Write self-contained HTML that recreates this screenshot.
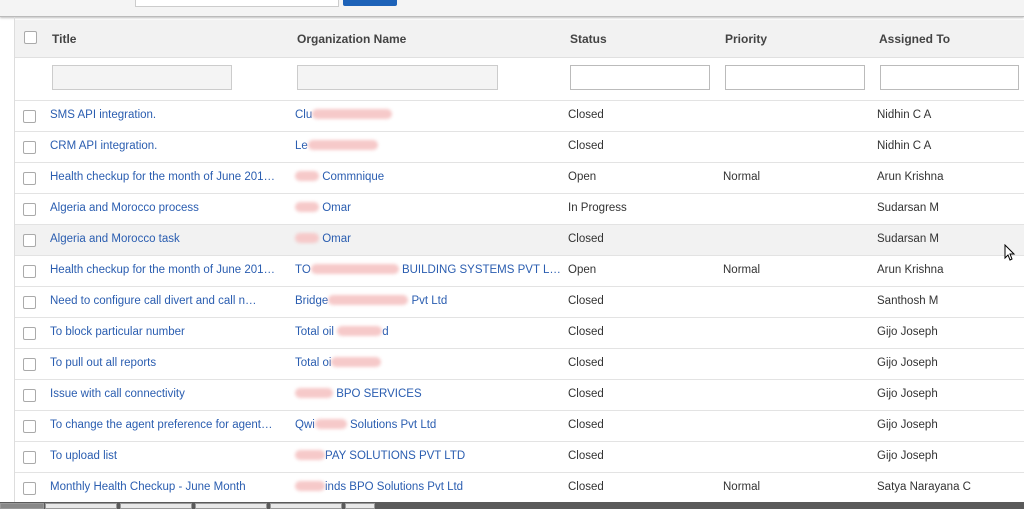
<!DOCTYPE html>
<html><head><style>
body{margin:0;width:1024px;height:509px;overflow:hidden;background:#fff;font-family:"Liberation Sans",sans-serif;position:relative}
.top{position:absolute;left:0;top:0;width:1024px;height:16px;background:#f4f4f4;border-bottom:1px solid #bbb;box-shadow:0 1px 2px rgba(0,0,0,.25)}
.srch{position:absolute;left:135px;top:-3px;width:202px;height:8px;background:#fff;border:1px solid #ccc}
.btn{position:absolute;left:343px;top:0;width:54px;height:6px;background:#1d62b8;border-radius:0 0 2px 2px}
.leftb{position:absolute;left:14px;top:17px;width:1px;height:485px;background:#ddd}
.hdr{position:absolute;left:15px;top:20px;width:1009px;height:37px;background:#f2f2f2;border-bottom:1px solid #e0e0e0}
.hdr span{position:absolute;top:12px;font-size:12px;font-weight:bold;color:#444}
.cb{position:absolute;width:11px;height:11px;border:1px solid #aaa;border-radius:2px;background:#fff}
.inp{position:absolute;top:65px;height:25px;border:1px solid #bbb;box-sizing:border-box}
.row{position:absolute;left:15px;width:1009px;height:30px;border-top:1px solid #e3e3e3;font-size:11.5px;color:#333}
.row span{position:absolute;top:8px;white-space:nowrap}
.row .t,.row .o{color:#2a5db0}
b.blur{display:inline-block;height:10px;background:#f6c9c9;border-radius:5px;vertical-align:-1px;filter:blur(1.5px);font-weight:normal}
.task{position:absolute;left:0;top:502px;width:1024px;height:7px;background:#5a5a5a}
.task i{position:absolute;top:1px;height:6px;background:#e8e8e8;border:1px solid #999;box-sizing:border-box}
</style></head><body>
<div class="top"><div class="srch"></div><div class="btn"></div></div>
<div class="leftb"></div>
<div class="hdr">
<div class="cb" style="left:9px;top:11px"></div>
<span style="left:37px">Title</span>
<span style="left:282px">Organization Name</span>
<span style="left:555px">Status</span>
<span style="left:710px">Priority</span>
<span style="left:864px">Assigned To</span>
</div>
<div class="inp" style="left:52px;width:180px;background:#f4f4f4;border-color:#ccc"></div>
<div class="inp" style="left:297px;width:201px;background:#f4f4f4;border-color:#ccc"></div>
<div class="inp" style="left:570px;width:140px"></div>
<div class="inp" style="left:725px;width:140px"></div>
<div class="inp" style="left:880px;width:139px"></div>

<div class="row" style="top:100px"><div class="cb" style="left:8px;top:9px"></div><span class="t" style="left:35px">SMS API integration.</span><span class="o" style="left:280px">Clu<b class="blur" style="width:80px"></b></span><span style="left:553px">Closed</span><span style="left:862px">Nidhin C A</span></div>
<div class="row" style="top:131px"><div class="cb" style="left:8px;top:9px"></div><span class="t" style="left:35px">CRM API integration.</span><span class="o" style="left:280px">Le<b class="blur" style="width:70px"></b></span><span style="left:553px">Closed</span><span style="left:862px">Nidhin C A</span></div>
<div class="row" style="top:162px"><div class="cb" style="left:8px;top:9px"></div><span class="t" style="left:35px">Health checkup for the month of June 201…</span><span class="o" style="left:280px"><b class="blur" style="width:24px"></b> Commnique</span><span style="left:553px">Open</span><span style="left:708px">Normal</span><span style="left:862px">Arun Krishna</span></div>
<div class="row" style="top:193px"><div class="cb" style="left:8px;top:9px"></div><span class="t" style="left:35px">Algeria and Morocco process</span><span class="o" style="left:280px"><b class="blur" style="width:24px"></b> Omar</span><span style="left:553px">In Progress</span><span style="left:862px">Sudarsan M</span></div>
<div class="row" style="top:224px;background:#f2f2f2"><div class="cb" style="left:8px;top:9px"></div><span class="t" style="left:35px">Algeria and Morocco task</span><span class="o" style="left:280px"><b class="blur" style="width:24px"></b> Omar</span><span style="left:553px">Closed</span><span style="left:862px">Sudarsan M</span></div>
<div class="row" style="top:255px"><div class="cb" style="left:8px;top:9px"></div><span class="t" style="left:35px">Health checkup for the month of June 201…</span><span class="o" style="left:280px">TO<b class="blur" style="width:88px"></b> BUILDING SYSTEMS PVT L…</span><span style="left:553px">Open</span><span style="left:708px">Normal</span><span style="left:862px">Arun Krishna</span></div>
<div class="row" style="top:286px"><div class="cb" style="left:8px;top:9px"></div><span class="t" style="left:35px">Need to configure call divert and call n…</span><span class="o" style="left:280px">Bridge<b class="blur" style="width:80px"></b> Pvt Ltd</span><span style="left:553px">Closed</span><span style="left:862px">Santhosh M</span></div>
<div class="row" style="top:317px"><div class="cb" style="left:8px;top:9px"></div><span class="t" style="left:35px">To block particular number</span><span class="o" style="left:280px">Total oil <b class="blur" style="width:45px"></b>d</span><span style="left:553px">Closed</span><span style="left:862px">Gijo Joseph</span></div>
<div class="row" style="top:348px"><div class="cb" style="left:8px;top:9px"></div><span class="t" style="left:35px">To pull out all reports</span><span class="o" style="left:280px">Total oi<b class="blur" style="width:50px"></b></span><span style="left:553px">Closed</span><span style="left:862px">Gijo Joseph</span></div>
<div class="row" style="top:379px"><div class="cb" style="left:8px;top:9px"></div><span class="t" style="left:35px">Issue with call connectivity</span><span class="o" style="left:280px"><b class="blur" style="width:38px"></b> BPO SERVICES</span><span style="left:553px">Closed</span><span style="left:862px">Gijo Joseph</span></div>
<div class="row" style="top:410px"><div class="cb" style="left:8px;top:9px"></div><span class="t" style="left:35px">To change the agent preference for agent…</span><span class="o" style="left:280px">Qwi<b class="blur" style="width:32px"></b> Solutions Pvt Ltd</span><span style="left:553px">Closed</span><span style="left:862px">Gijo Joseph</span></div>
<div class="row" style="top:441px"><div class="cb" style="left:8px;top:9px"></div><span class="t" style="left:35px">To upload list</span><span class="o" style="left:280px"><b class="blur" style="width:30px"></b>PAY SOLUTIONS PVT LTD</span><span style="left:553px">Closed</span><span style="left:862px">Gijo Joseph</span></div>
<div class="row" style="top:472px;border-bottom:1px solid #e3e3e3"><div class="cb" style="left:8px;top:9px"></div><span class="t" style="left:35px">Monthly Health Checkup - June Month</span><span class="o" style="left:280px"><b class="blur" style="width:30px"></b>inds BPO Solutions Pvt Ltd</span><span style="left:553px">Closed</span><span style="left:708px">Normal</span><span style="left:862px">Satya Narayana C</span></div>
<svg style="position:absolute;left:1004px;top:244px" width="12" height="18" viewBox="0 0 12 18"><path d="M1 1 L1 14 L4 11 L6 16 L8 15 L6 10 L10 10 Z" fill="#fff" stroke="#000" stroke-width="1"/></svg>
<div class="task"><i style="left:0;width:44px;background:#888"></i><i style="left:45px;width:72px"></i><i style="left:120px;width:72px"></i><i style="left:195px;width:72px"></i><i style="left:270px;width:72px"></i><i style="left:345px;width:30px"></i></div>
</body></html>
